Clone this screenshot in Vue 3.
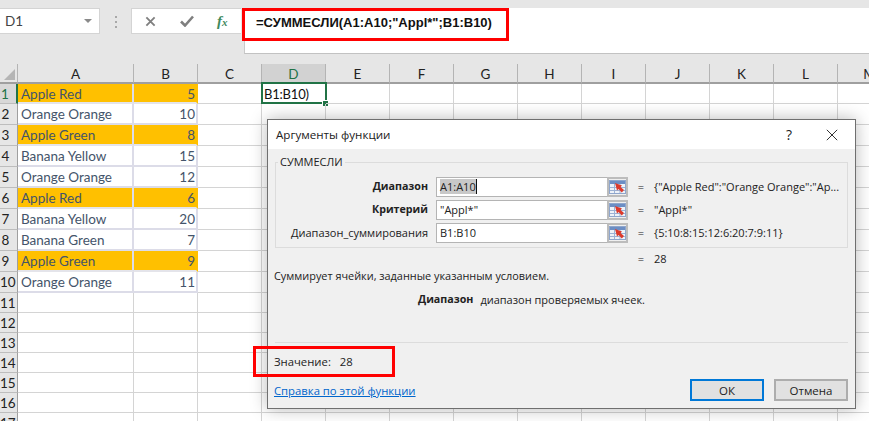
<script setup>
const columns = ['A', 'B', 'C', 'D', 'E', 'F', 'G', 'H', 'I', 'J', 'K', 'L', 'M']

const tableRows = [
  ['Apple Red', 5, true],
  ['Orange Orange', 10, false],
  ['Apple Green', 8, true],
  ['Banana Yellow', 15, false],
  ['Orange Orange', 12, false],
  ['Apple Red', 6, true],
  ['Banana Yellow', 20, false],
  ['Banana Green', 7, false],
  ['Apple Green', 9, true],
  ['Orange Orange', 11, false]
]

const rowNumbers = Array.from({ length: 17 }, (_, i) => i + 1)
const emptyColumns = columns.slice(2)

const args = [
  { label: 'Диапазон', value: 'A1:A10', result: '{"Apple Red":"Orange Orange":"Ap...', strong: true, selected: true },
  { label: 'Критерий', value: '"Appl*"', result: '"Appl*"', strong: true },
  { label: 'Диапазон_суммирования', value: 'B1:B10', result: '{5:10:8:15:12:6:20:7:9:11}' }
]
</script>

<template>
  <div class="excel">
    <div class="formula-area">
      <div class="name-box">
        <span>D1</span>
        <i class="name-arrow"></i>
      </div>
      <div class="grip"><i></i><i></i><i></i></div>
      <div class="func-buttons">
        <svg class="fb-icon" width="11" height="11" viewBox="0 0 12 12" fill="none" stroke="#7f7f7f" stroke-width="2">
          <path d="M1.5 1.5 10.5 10.5M10.5 1.5 1.5 10.5" />
        </svg>
        <svg class="fb-icon" width="14" height="12" viewBox="0 0 14 12" fill="none" stroke="#7f7f7f" stroke-width="2.6">
          <path d="M1 6.5 5 10.5 13 1.5" />
        </svg>
        <span class="fx">f<small>x</small></span>
      </div>
      <div class="formula-input">=СУММЕСЛИ(A1:A10;"Appl*";B1:B10)</div>
    </div>

    <div class="sheet">
      <div class="corner"><i></i></div>
      <div v-for="col in columns" :key="col" :class="['col-head', { active: col === 'D' }]">{{ col }}</div>

      <template v-for="row in rowNumbers" :key="row">
        <div :class="['row-head', { active: row === 1, tall: row <= 10 }]">{{ row }}</div>
        <template v-if="row <= 10">
          <div :class="['cell', 'data', 'text', { gold: tableRows[row - 1][2] }]">{{ tableRows[row - 1][0] }}</div>
          <div :class="['cell', 'data', 'num', { gold: tableRows[row - 1][2] }]">{{ tableRows[row - 1][1] }}</div>
        </template>
        <template v-else>
          <div class="cell"></div>
          <div class="cell"></div>
        </template>
        <div
          v-for="col in emptyColumns"
          :key="col"
          :class="['cell', { selected: row === 1 && col === 'D' }]"
        >
          <template v-if="row === 1 && col === 'D'">B1:B10)</template>
        </div>
      </template>
    </div>

    <div class="dialog">
      <div class="dialog-title">
        <span>Аргументы функции</span>
        <span class="help">?</span>
        <svg class="close" width="12" height="12" viewBox="0 0 12 12" fill="none" stroke="#333" stroke-width="1">
          <path d="M.8.8 11.2 11.2M11.2.8.8 11.2" />
        </svg>
      </div>
      <div class="dialog-body">
        <fieldset class="group">
          <legend>СУММЕСЛИ</legend>
          <div v-for="arg in args" :key="arg.label" class="arg-row">
            <label :class="{ strong: arg.strong }">{{ arg.label }}</label>
            <div class="arg-input">
              <div class="arg-value">
                <span v-if="arg.selected" class="selection">{{ arg.value }}</span>
                <template v-else>{{ arg.value }}</template>
              </div>
              <div class="ref-btn">
                <svg width="17" height="14" viewBox="0 0 17 14">
                  <rect x="0.5" y="0.5" width="16" height="13" fill="#eef2f8" stroke="#8fa6cc" />
                  <rect x="1" y="1" width="15" height="3" fill="#6c8ec4" />
                  <path d="M1 7.5H16M1 10.5H16M5.5 4V13M11 4V13" stroke="#9db2d4" fill="none" />
                  <path d="M6 3 13 5.5 11.6 7 15 10 12.8 12.4 9.6 9 8 10.5Z" fill="#dc3a2c" />
                </svg>
              </div>
            </div>
            <span class="eq">=</span>
            <span class="arg-result">{{ arg.result }}</span>
          </div>
        </fieldset>

        <div class="total-row"><span class="eq">=</span><span>28</span></div>
        <p class="desc">Суммирует ячейки, заданные указанным условием.</p>
        <p class="arg-desc"><b>Диапазон</b><span>диапазон проверяемых ячеек.</span></p>

        <div class="dialog-foot">
          <div class="value-line"><span>Значение:</span><span>28</span></div>
          <div class="foot-row">
            <a class="help-link">Справка по этой функции</a>
            <button class="btn primary">ОК</button>
            <button class="btn">Отмена</button>
          </div>
        </div>
      </div>
    </div>

    <div class="mark mark-formula"></div>
    <div class="mark mark-value"></div>
  </div>
</template>

<style>
html,
body {
  margin: 0;
  background: #fff;
}
</style>

<style scoped>
.excel {
  position: relative;
  width: 869px;
  height: 421px;
  overflow: hidden;
  background: #fff;
  font-family: "Open Sans", "Noto Sans", sans-serif;
  color: #222;
}

/* formula bar */
.formula-area {
  display: flex;
  align-items: flex-start;
  height: 64px;
  padding-top: 8px;
  box-sizing: border-box;
  background: #e6e6e6;
}

.name-box {
  display: flex;
  align-items: center;
  justify-content: space-between;
  width: 100px;
  height: 26px;
  padding: 0 6px 0 5px;
  box-sizing: border-box;
  background: #fff;
  border: 1px solid #d4d4d4;
  border-left: none;
  font-family: "Lato", sans-serif;
  font-size: 13.5px;
  color: #444;
}

.name-arrow {
  border-left: 4px solid transparent;
  border-right: 4px solid transparent;
  border-top: 4px solid #8a8a8a;
  margin-right: 1px;
}

.grip {
  display: flex;
  flex-direction: column;
  align-items: center;
  gap: 3px;
  width: 31px;
  padding: 8px 0 0;
  box-sizing: border-box;
}

.grip i {
  width: 2px;
  height: 2px;
  background: #a8a8a8;
}

.func-buttons {
  display: flex;
  align-items: center;
  width: 110px;
  height: 26px;
  box-sizing: border-box;
  padding-left: 13px;
  background: #fff;
  border: 1px solid #d4d4d4;
  border-right: none;
}

.fb-icon:nth-child(2) {
  margin-left: 24px;
}

.fx {
  margin-left: 23px;
  font-family: "Liberation Serif", serif;
  font-style: italic;
  font-weight: 700;
  font-size: 15px;
  line-height: 1;
  color: #3f8a5e;
}

.fx small {
  font-size: 11px;
}

.formula-input {
  flex: 1;
  height: 46px;
  margin-left: 3px;
  padding: 6px 0 0 11px;
  box-sizing: border-box;
  background: #fff;
  border-left: 1px solid #c9c9c9;
  border-bottom: 1px solid #c2c2c2;
  font-family: "Liberation Sans", sans-serif;
  font-weight: 700;
  font-size: 13px;
  line-height: 18px;
  color: #111;
}

/* sheet */
.sheet {
  display: grid;
  grid-template-columns: 18px 116px repeat(12, 64px);
  grid-template-rows: 20px 20px repeat(9, 21px) repeat(7, 20px);
  width: 900px;
  font-family: "Lato", sans-serif;
  font-size: 13.5px;
}

.corner {
  position: relative;
  background: #e6e6e6;
  border-bottom: 2px solid #9f9f9f;
  border-right: 1px solid #b4b4b4;
  box-sizing: border-box;
}

.corner i {
  position: absolute;
  right: 2px;
  bottom: 2px;
  border-left: 11px solid transparent;
  border-bottom: 11px solid #b5b5b5;
}

.col-head {
  line-height: 20px;
  text-align: center;
  box-sizing: border-box;
  background: #e6e6e6;
  border-bottom: 2px solid #9f9f9f;
  border-right: 1px solid #b4b4b4;
  color: #222;
}

.col-head.active {
  background: #d2d2d2;
  color: #217346;
}

.row-head {
  line-height: 20px;
  padding-right: 6px;
  text-align: center;
  box-sizing: border-box;
  background: #e6e6e6;
  border-bottom: 1px solid #bdbdbd;
  border-right: 1px solid #9f9f9f;
  color: #222;
  white-space: nowrap;
}

.row-head.tall {
  line-height: 21px;
}

.row-head.active {
  background: #d8d8d8;
  color: #217346;
  border-right: 2px solid #217346;
}

.cell {
  position: relative;
  box-sizing: border-box;
  border-right: 1px solid #d4d4d4;
  border-bottom: 1px solid #d4d4d4;
  line-height: 21px;
  white-space: nowrap;
}

.cell.data {
  border-right: 2px solid #dcdce8;
  border-bottom: 2px solid #dcdce8;
  color: #44546a;
}

.cell.text {
  padding-left: 3px;
}

.cell.num {
  padding-right: 1px;
  text-align: right;
}

.cell.gold {
  background: #ffc000;
  border-bottom-color: #e4e4ea;
}

.cell.num.gold {
  border-right-color: #ffc000;
}

.cell.selected {
  padding-left: 2px;
  font-size: 13px;
  letter-spacing: -0.2px;
  color: #111;
}

.cell.selected::before {
  content: "";
  position: absolute;
  inset: -2px -2px -1px -1px;
  border: 2px solid #217346;
}

.cell.selected::after {
  content: "";
  position: absolute;
  right: -3px;
  bottom: -3px;
  width: 5px;
  height: 5px;
  background: #217346;
  border-top: 1px solid #fff;
  border-left: 1px solid #fff;
}

/* dialog */
.dialog {
  position: absolute;
  left: 267px;
  top: 119px;
  width: 589px;
  height: 290px;
  box-sizing: border-box;
  background: #f0f0f0;
  border: 1px solid #6f6f6f;
  box-shadow: 0 0 16px rgba(0, 0, 0, 0.28);
  font-family: "Open Sans", sans-serif;
  font-size: 11px;
  color: #222;
}

.dialog-title {
  display: flex;
  align-items: center;
  height: 29px;
  padding: 0 17px 0 8px;
  background: #fff;
  font-size: 11.6px;
}

.help {
  margin-left: auto;
  margin-right: 34px;
  font-size: 14px;
}

.dialog-body {
  display: flex;
  flex-direction: column;
  height: 259px;
  padding: 5px 7px 0;
  box-sizing: border-box;
}

.group {
  margin: 0;
  padding: 7px 0 4px;
  border: 1px solid #dcdcdc;
  display: flex;
  flex-direction: column;
  gap: 3px;
}

.group legend {
  margin-left: 2px;
  padding: 0 2px;
  line-height: 16px;
}

.arg-row {
  display: grid;
  grid-template-columns: 152px 192px 10px 1fr;
  column-gap: 8px;
  align-items: center;
  height: 20px;
}

.arg-row label {
  padding-bottom: 2px;
  text-align: right;
}

.arg-row .strong {
  font-weight: 700;
  font-size: 10.7px;
}

.arg-input {
  display: flex;
  height: 20px;
  box-sizing: border-box;
  border: 1px solid #b4b4b4;
  background: #fff;
}

.arg-value {
  flex: 1;
  padding-left: 3px;
  line-height: 17px;
}

.selection {
  display: inline-block;
  background: #c8c8c8;
  line-height: 15px;
  border-right: 1px solid #111;
}

.ref-btn {
  display: flex;
  align-items: center;
  justify-content: center;
  width: 21px;
  margin: -1px -1px -1px 0;
  box-sizing: border-box;
  background: #efefef;
  border: 2px solid #bcbcbc;
}

.arg-row .eq,
.arg-result {
  padding-bottom: 2px;
}

.eq {
  text-align: center;
}

.arg-result {
  white-space: nowrap;
}

.total-row {
  display: flex;
  gap: 8px;
  height: 16px;
  margin-top: 3px;
  padding-left: 361px;
  line-height: 16px;
}

.total-row .eq {
  width: 10px;
}

.desc {
  margin: 0 0 0 -1px;
  font-size: 10.9px;
  line-height: 17px;
}

.arg-desc {
  display: flex;
  gap: 7px;
  margin: 7px 0 0 143px;
  line-height: 17px;
}

.arg-desc b {
  font-size: 10.7px;
}

.dialog-foot {
  margin-top: auto;
  border-top: 1px solid #dcdcdc;
}

.value-line {
  display: flex;
  gap: 9px;
  height: 36px;
  padding-top: 10px;
  box-sizing: border-box;
  margin-left: -1px;
  font-size: 11.3px;
  line-height: 17px;
}

.foot-row {
  display: flex;
  align-items: center;
  gap: 10px;
  height: 22px;
  margin-bottom: 7px;
  margin-left: -1px;
}

.help-link {
  margin-right: auto;
  font-size: 11.3px;
  color: #0066cc;
  text-decoration: underline;
}

.btn {
  width: 74px;
  height: 22px;
  padding: 0;
  box-sizing: border-box;
  background: #e1e1e1;
  border: 2px solid #adadad;
  font: inherit;
  font-size: 11.5px;
  color: #222;
}

.btn.primary {
  border-color: #0078d7;
}

/* red annotations */
.mark {
  position: absolute;
  box-sizing: border-box;
  border: 3px solid #ff0000;
}

.mark-formula {
  left: 242px;
  top: 8px;
  width: 267px;
  height: 33px;
}

.mark-value {
  left: 253px;
  top: 346px;
  width: 142px;
  height: 31px;
}
</style>
